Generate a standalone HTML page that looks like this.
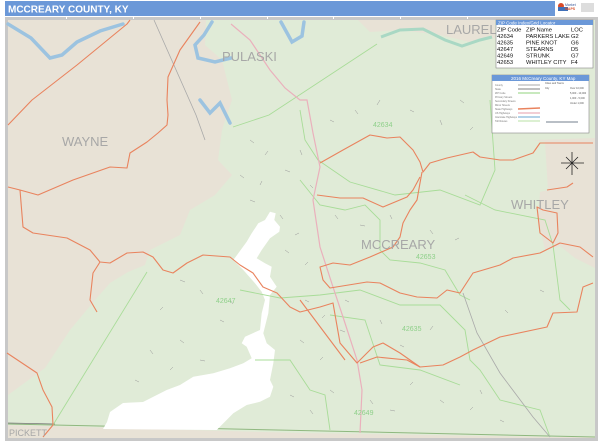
<!DOCTYPE html>
<html><head><meta charset="utf-8"><style>
html,body{margin:0;padding:0;background:#fff;width:600px;height:442px;overflow:hidden}
svg{display:block;font-family:"Liberation Sans",sans-serif}
</style></head><body>
<svg width="600" height="442" viewBox="0 0 600 442" xmlns="http://www.w3.org/2000/svg">
<rect x="0" y="0" width="600" height="442" fill="#fff"/>
<rect x="5" y="1" width="550" height="15" fill="#6b98d8"/>
<text x="8" y="12.5" font-size="10" font-weight="bold" fill="#fff">MCCREARY COUNTY, KY</text>
<rect x="556" y="1" width="42" height="15" fill="#fff"/>
<circle cx="561" cy="6" r="3" fill="#d84a2a"/>
<rect x="558" y="7" width="10" height="4" fill="#3f6fb8"/>
<text x="565" y="6" font-size="3.5" fill="#3a5a9a">Market</text>
<text x="565" y="10" font-size="3.5" fill="#d8502a" font-weight="bold">MAPS</text>
<rect x="581" y="3" width="13" height="9" fill="#ddd"/>
<rect x="5" y="17" width="593" height="424" fill="#c8c8c8"/>
<rect x="8" y="20" width="587" height="418" fill="#e0ebd7"/>
<g fill="#fff">
<rect x="66" y="17" width="1" height="2"/><rect x="133" y="17" width="1" height="2"/><rect x="200" y="17" width="1" height="2"/><rect x="267" y="17" width="1" height="2"/><rect x="333" y="17" width="1" height="2"/><rect x="400" y="17" width="1" height="2"/><rect x="467" y="17" width="1" height="2"/>
</g>
<g fill="#e8e2d6">
<path d="M8 20 L206 20 L205 45 L222 60 L232 100 L222 130 L218 160 L232 175 L215 195 L190 210 L180 235 L150 250 L145 265 L128 272 L110 283 L95 300 L70 330 L45 368 L8 395 Z"/>
<path d="M358 20 L495 20 L495 38 L470 42 L440 35 L400 30 L370 32 Z"/>
<path d="M533 140 L595 138 L595 268 L575 258 L560 246 L545 250 L538 218 L540 192 L548 190 L545 142 Z"/>
<path d="M8 425 L300 433 L550 437 L595 437 L595 438 L8 438 Z"/>
</g>
<line x1="8" y1="424" x2="595" y2="437" stroke="#8fb87f" stroke-width="1"/>
<line x1="8" y1="423" x2="55" y2="424" stroke="#777" stroke-width="0.8"/>
<!-- street texture -->
<g stroke="#9a9a9a" stroke-width="0.5" fill="none">
<path d="M250 140 l4 3 M265 155 l3 -4 M285 170 l5 2 M300 150 l2 5 M330 120 l4 2 M355 110 l3 4 M380 100 l-3 5 M410 110 l4 2 M440 120 l2 5 M460 100 l4 3 M470 130 l3 -3 M250 200 l5 2 M280 215 l3 4 M295 235 l4 -2 M335 215 l3 4 M360 225 l5 1 M390 215 l2 4 M240 175 l4 3 M260 185 l2 -4 M285 250 l4 3 M305 265 l3 -3 M180 280 l5 2 M200 290 l3 4 M220 320 l4 2 M160 310 l3 -3 M180 340 l4 3 M200 360 l5 1 M150 350 l3 4 M135 380 l4 2 M170 370 l3 -3 M230 300 l3 4 M300 340 l4 3 M320 360 l3 -3 M340 330 l5 2 M380 320 l2 4 M400 345 l4 2 M430 330 l3 -4 M330 390 l4 3 M370 400 l3 4 M390 410 l5 1 M410 385 l3 -3 M290 395 l4 2 M310 410 l3 4 M440 400 l4 3 M470 410 l3 -3 M500 420 l4 2 M480 390 l2 4 M505 310 l3 3 M540 290 l4 2 M430 230 l3 4 M455 240 l4 -2 M310 185 l3 3 M305 300 l4 2 M325 315 l-3 3 M345 300 l4 2"/>
</g>
<path fill="#fff" d="M270 211.7 L275.7 213.3 L274.3 220 L280 226.7 L279.3 231.7 L270 238.3 L261.7 250 L256.7 258.3 L265 263.3 L271.7 266.7 L270 276.7 L276.7 286.7 L270 295 L268.3 313.3 L263.3 333.3 L266.7 343.3 L275 350 L273.3 363.3 L270 380 L273.3 386.7 L270 396.7 L260 401.7 L246.7 405 L233.3 413.3 L216.7 430 L103 429 L107 422 L110 412 L123 403 L143 402 L166.7 390 L180 385 L193.3 376.7 L213.3 373.3 L230 368.3 L243.3 363.3 L251.7 358.3 L246.7 346.7 L241.7 343.3 L245 336.7 L260 330 L261.7 313.3 L265 300 L261.7 291.7 L255 283.3 L243.3 270 L233.3 260 L238.3 253.3 L246.7 241.7 L251.7 233.3 L258.3 223.3 L265 220 Z"/>
<g fill="none" stroke="#9cc3e0" stroke-width="3.5" stroke-linecap="round">
<path d="M8 24 L31 38 L50 58 L62 55 L77 42 L100 31 L123 24"/>
<path d="M212 22 L204 35 L195 45 L198 58 L215 62 L231 58"/>
<path d="M281 22 L292 42 L302 36 L304 22"/>
<path d="M200 100 L210 113 L220 103 L230 123"/>
</g>
<path d="M381 37 L400 30 L423 29 L445 40 L462 46 L480 40 L492 37" fill="none" stroke="#a9d8c4" stroke-width="3"/>
<g fill="none" stroke="#a8dc98" stroke-width="0.9">
<path d="M377 44 L269 115 L233 127"/>
<path d="M147 272 L53 425"/>
<path d="M300 110 L305 140 L318 160 L350 182 L395 195 L440 190 L480 205 L495 170 L490 100"/>
<path d="M300 180 L320 205 L345 210 L365 205 L380 220 L380 250 L390 260 L420 263 L445 270 L460 295 L470 300"/>
<path d="M240 290 L280 298 L320 295 L360 290 L400 305 L440 305 L465 330 L470 360 L480 370 L500 400 L540 410 L550 437"/>
<path d="M330 315 L365 320 L380 365 L420 370 L460 385"/>
<path d="M255 360 L290 360 L310 390 L325 395 L330 430"/>
<path d="M465 195 L495 210 L545 220 L553 245 L560 300 L570 310"/>
</g>
<g fill="none" stroke="#a9a9a9" stroke-width="0.8">
<path d="M154 20 L196 115 L205 140"/>
<path d="M463 293 L477 333 L500 373 L533 417 L550 437"/>
</g>
<path d="M231 24 L250 40 L270 70 L285 88 L300 100 L307 100 L313 133 L320 167 L313 200 L320 247 L333 287 L343 317 L357 360 L362 390 L360 433" fill="none" stroke="#eab0bc" stroke-width="1.2"/>
<g fill="none" stroke="#e9835e" stroke-width="1.1" stroke-linejoin="round">
<path d="M8 187 L20 190 L38 195 L73 180 L110 167 L127 168 L130 153 L147 142 L158 133 L167 125 L168 115 L167 100 L168 77 L180 50 L200 22"/>
<path d="M8 125 L32 100 L77 65 L127 24 L130 20"/>
<path d="M20 190 L23 227 L33 233 L67 238 L90 250 L100 262 L110 263 L127 253 L143 252 L153 257 L163 270 L173 273 L187 263 L203 255 L230 257 L240 265 L253 273 L263 287 L277 293 L290 307 L300 312 L320 307 L333 303 L340 343 L357 363 L373 347 L383 343 L400 353 L420 367 L443 365 L460 357 L473 350 L500 337 L547 327 L553 313 L577 312 L583 287 L593 283"/>
<path d="M100 262 L93 273 L90 300 L97 312"/>
<path d="M7 353 L13 357 L37 373 L43 390 L52 407 L53 425 L43 437"/>
<path d="M320 163 L343 150 L370 135 L387 138 L400 137 L413 150 L420 162 L423 172 L430 163 L447 158 L473 152 L480 157 L500 160 L513 160 L533 153 L540 143 L563 143 L593 143"/>
<path d="M422 172 L420 183 L417 200 L410 210 L403 223 L400 237 L393 247 L370 257 L350 265 L333 263 L320 267 L323 280 L330 288 L367 282 L380 283 L400 293 L417 297 L437 298 L447 290 L460 293 L473 273 L500 265 L513 258 L540 253 L560 243 L580 247 L593 257"/>
<path d="M317 195 L340 198 L363 198 L383 207 L407 197 L413 190 L420 177"/>
<path d="M360 363 L377 357 L407 360 L420 367"/>
<path d="M537 207 L540 233 L553 243 L558 233 L557 213 L543 210 Z"/>
<path d="M547 190 L567 187 L573 183"/>
<path d="M300 300 L315 320 L330 340 L345 360"/>
</g>
<g fill="#a7a7a7" font-size="13">
<text x="62" y="146">WAYNE</text>
<text x="222" y="61">PULASKI</text>
<text x="446" y="34">LAUREL</text>
<text x="511" y="209">WHITLEY</text>
<text x="361" y="249">MCCREARY</text>
<text x="9" y="436" font-size="9">PICKETT</text>
</g>
<g fill="#8fd08a" font-size="7">
<text x="373" y="127">42634</text>
<text x="416" y="259">42653</text>
<text x="216" y="303">42647</text>
<text x="402" y="331">42635</text>
<text x="354" y="415">42649</text>
</g>
<g stroke="#222" stroke-width="0.8"><line x1="572" y1="152" x2="572" y2="175"/><line x1="561" y1="163" x2="584" y2="163"/><line x1="566" y1="157" x2="578" y2="169"/><line x1="578" y1="157" x2="566" y2="169"/></g>
<rect x="496" y="20" width="97" height="48" fill="#fff" stroke="#888" stroke-width="0.6"/>
<rect x="496" y="20" width="97" height="5" fill="#6b98d8"/>
<text x="498" y="24.3" font-size="4.5" fill="#fff">ZIP Code Index/Grid Locator</text>
<g font-size="5.8" fill="#111">
<text x="497" y="31.5">ZIP Code</text><text x="526" y="31.5">ZIP Name</text><text x="571" y="31.5">LOC</text>
<text x="497" y="38">42634</text><text x="526" y="38">PARKERS LAKE</text><text x="571" y="38">G2</text>
<text x="497" y="44.5">42635</text><text x="526" y="44.5">PINE KNOT</text><text x="571" y="44.5">G6</text>
<text x="497" y="51">42647</text><text x="526" y="51">STEARNS</text><text x="571" y="51">D5</text>
<text x="497" y="57.5">42649</text><text x="526" y="57.5">STRUNK</text><text x="571" y="57.5">G7</text>
<text x="497" y="64">42653</text><text x="526" y="64">WHITLEY CITY</text><text x="571" y="64">F4</text>
</g>
<rect x="492" y="75" width="97" height="58" fill="#fff" stroke="#888" stroke-width="0.6"/>
<rect x="492" y="75" width="97" height="6" fill="#6b98d8"/>
<text x="511" y="80" font-size="4.5" fill="#fff">2016 McCreary County, KY Map</text>
<g font-size="2.5" fill="#777">
<text x="495" y="86">County</text><text x="495" y="90">State</text><text x="495" y="94">ZIP Code</text><text x="495" y="98">Primary Streets</text><text x="495" y="102">Secondary Streets</text><text x="495" y="106">Minor Streets</text><text x="495" y="110">State Highways</text><text x="495" y="114">US Highways</text><text x="495" y="118">Interstate Highways</text><text x="495" y="122">Toll Routes</text>
</g>
<g stroke-width="1.2"><line x1="518" y1="85" x2="540" y2="85" stroke="#bbb"/><line x1="518" y1="89" x2="540" y2="89" stroke="#999"/><line x1="518" y1="93" x2="540" y2="93" stroke="#a8dc98"/><line x1="518" y1="109" x2="540" y2="108" stroke="#e9835e" stroke-width="1.6"/><line x1="518" y1="113" x2="540" y2="113" stroke="#eab0bc"/><line x1="518" y1="117" x2="540" y2="117" stroke="#9cc3e0" stroke-width="1.6"/><line x1="518" y1="121" x2="540" y2="121" stroke="#c8e8b8"/></g>
<line x1="546" y1="122" x2="578" y2="122" stroke="#456" stroke-width="0.7"/>
<g font-size="2.5" fill="#555"><text x="545" y="84">Cities and Towns</text><text x="545" y="89">City</text><text x="570" y="89">Over 10,000</text><text x="570" y="94">5,000 - 10,000</text><text x="570" y="99">1,000 - 5,000</text><text x="570" y="104">Under 1,000</text></g>
</svg>
</body></html>
